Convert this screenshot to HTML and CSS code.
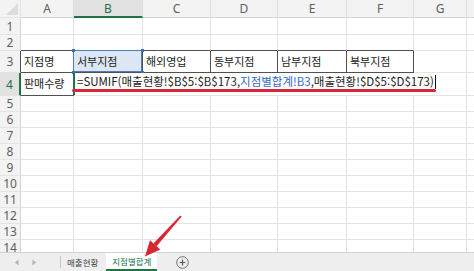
FILE: index.html
```html
<!DOCTYPE html>
<html lang="ko">
<head>
    <meta charset="UTF-8">
    <title>지점별합계</title>
    <link rel="stylesheet" href="styles.css">
</head>
<body>
<div class="app">
    <div class="sheet">
        <div class="grid">
            <div class="corner"><span class="tri"></span></div>
            <div class="ch">A</div><div class="ch sel">B</div><div class="ch">C</div><div class="ch">D</div><div class="ch">E</div><div class="ch">F</div><div class="ch">G</div><div class="ch"></div>

            <div class="rh">1</div><div></div><div></div><div></div><div></div><div></div><div></div><div></div><div></div>
            <div class="rh">2</div><div class="above"></div><div class="above"></div><div class="above"></div><div class="above"></div><div class="above"></div><div class="above"></div><div></div><div></div>

            <div class="rh edge">3</div>
            <div class="t">지점명</div>
            <div class="t ref">서부지점
                <i class="hd tl"></i><i class="hd tr"></i><i class="hd bl"></i><i class="hd br"></i>
            </div>
            <div class="t">해외영업</div>
            <div class="t">동부지점</div>
            <div class="t">남부지점</div>
            <div class="t">북부지점</div>
            <div></div><div></div>

            <div class="rh sel">4</div>
            <div class="t low">판매수량</div>
            <div class="active">
                <div class="editor">=SUMIF(매출현황!$B$5:$B$173,<span class="hl">지점별합계!B3</span>,매출현황!$D$5:$D$173)<span class="caret"></span></div>
            </div>
            <div></div><div></div><div></div><div></div><div></div><div></div>

            <div class="rh">5</div><div></div><div></div><div></div><div></div><div></div><div></div><div></div><div></div>
            <div class="rh">6</div><div></div><div></div><div></div><div></div><div></div><div></div><div></div><div></div>
            <div class="rh">7</div><div></div><div></div><div></div><div></div><div></div><div></div><div></div><div></div>
            <div class="rh">8</div><div></div><div></div><div></div><div></div><div></div><div></div><div></div><div></div>
            <div class="rh">9</div><div></div><div></div><div></div><div></div><div></div><div></div><div></div><div></div>
            <div class="rh">10</div><div></div><div></div><div></div><div></div><div></div><div></div><div></div><div></div>
            <div class="rh">11</div><div></div><div></div><div></div><div></div><div></div><div></div><div></div><div></div>
            <div class="rh">12</div><div></div><div></div><div></div><div></div><div></div><div></div><div></div><div></div>
            <div class="rh">13</div><div></div><div></div><div></div><div></div><div></div><div></div><div></div><div></div>
            <div class="rh">14</div><div></div><div></div><div></div><div></div><div></div><div></div><div></div><div></div>
        </div>
        <div class="mark"></div>
    </div>

    <div class="tabs">
        <div class="nav">
            <svg width="5" height="7" viewBox="0 0 5 7"><path d="M4.5 0.5 L0.8 3.5 L4.5 6.5 Z" fill="#b4b4b4"/></svg>
            <svg width="5" height="7" viewBox="0 0 5 7"><path d="M0.5 0.5 L4.2 3.5 L0.5 6.5 Z" fill="#b4b4b4"/></svg>
        </div>
        <div class="tab">매출현황</div>
        <div class="tab current">지점별합계</div>
        <div class="add">
            <svg width="13" height="13" viewBox="0 0 13 13">
                <circle cx="6.5" cy="6.5" r="5.8" fill="none" stroke="#6f6f6f" stroke-width="1"/>
                <path d="M6.5 3.6 V9.4 M3.6 6.5 H9.4" stroke="#555" stroke-width="1.2"/>
            </svg>
        </div>
    </div>

    <svg class="arrow" width="474" height="271" viewBox="0 0 474 271">
        <polygon points="181.7,216.6 156.6,246.3 153.4,243.5 180.3,215.4" fill="#d7262f"/>
        <polygon points="145,256.5 160.2,249.4 150,240.3" fill="#d7262f"/>
    </svg>
</div>
</body>
</html>
```

FILE: styles.css
```css
body {
    margin: 0;
    background: #fff;
    font-family: "Noto Sans CJK KR", "Noto Sans", sans-serif;
}

.app {
    position: relative;
    width: 474px;
    height: 271px;
    overflow: hidden;
}

.sheet {
    position: relative;
    height: 252px;
    overflow: hidden;
}

.grid {
    display: grid;
    grid-template-columns: 21px 53px 69px 68px 67px 69px 67px 53px 40px;
    grid-template-rows: 18px 17px 16px 22px 23px repeat(10, 16px);
}

.grid > div {
    box-sizing: border-box;
    border-right: 1px solid #e3e3e3;
    border-bottom: 1px solid #e3e3e3;
    font-size: 11px;
    color: #1a1a1a;
}

.corner {
    background: #f3f3f3;
    display: flex;
    align-items: flex-end;
    justify-content: flex-end;
    padding: 0 2px 2px 0;
}

.tri {
    width: 0;
    height: 0;
    border-left: 12px solid transparent;
    border-bottom: 12px solid #dcdcdc;
}

.grid > .ch {
    background: #f3f3f3;
    border-right-color: #dedede;
    border-bottom-color: #d4d4d4;
    font-family: "Noto Sans", sans-serif;
    font-size: 12px;
    color: #5e5e5e;
    display: flex;
    align-items: center;
    justify-content: center;
}

.grid > .ch.sel {
    background: #e1e1e1;
    color: #217346;
    border-bottom: 2px solid #217346;
}

.grid > .rh {
    background: #f3f3f3;
    border-right-color: #d4d4d4;
    border-bottom-color: #e3e3e3;
    font-family: "Noto Sans", sans-serif;
    font-size: 12px;
    color: #5e5e5e;
    display: flex;
    align-items: center;
    justify-content: center;
}

.grid > .rh.edge {
    border-right-color: #505050;
}

.grid > .rh.sel {
    background: #e1e1e1;
    color: #217346;
    border-right: 2px solid #217346;
}

.grid > .above {
    border-bottom-color: #505050;
}

.grid > .t {
    border-right-color: #505050;
    border-bottom-color: #505050;
    padding-left: 3px;
    line-height: 20px;
    white-space: nowrap;
}

.grid > .t.low {
    line-height: 21px;
}

.grid > .ref {
    position: relative;
    background: #dce6f4;
}

.ref::after {
    content: "";
    position: absolute;
    top: -1px;
    left: -1px;
    right: 0;
    bottom: 0;
    border: 1px solid #4a7ebf;
}

.hd {
    position: absolute;
    width: 3px;
    height: 3px;
    background: #3b6fb6;
    z-index: 1;
}

.hd.tl { top: -2px; left: -2px; }
.hd.tr { top: -2px; right: -2px; }
.hd.bl { bottom: -2px; left: -2px; }
.hd.br { bottom: -2px; right: -2px; }

.grid > .active {
    position: relative;
}

.editor {
    position: absolute;
    top: 0;
    left: -1px;
    width: 361px;
    height: 22px;
    box-sizing: border-box;
    background: #fff;
    border-left: 2px solid #217346;
    padding-left: 2px;
    font-size: 11.5px;
    line-height: 16px;
    color: #1a1a1a;
    white-space: nowrap;
    z-index: 2;
}

.hl {
    color: #3169c6;
}

.caret {
    display: inline-block;
    width: 0;
    height: 14px;
    border-left: 1px solid #111;
    margin-left: 1px;
    vertical-align: -3px;
}

.mark {
    position: absolute;
    left: 72px;
    top: 89px;
    width: 364px;
    height: 3px;
    border-radius: 2px;
    background: #d7263a;
    z-index: 3;
}

.tabs {
    height: 19px;
    box-sizing: border-box;
    border-top: 1px solid #d2d2d2;
    background: #eeeeee;
    display: flex;
    align-items: stretch;
    font-size: 8.5px;
    color: #444;
}

.nav {
    width: 61px;
    box-sizing: border-box;
    display: flex;
    align-items: center;
    gap: 13px;
    padding-left: 14px;
    border-right: 1px solid #c4c4c4;
    margin: 3px 0;
}

.tab {
    display: flex;
    align-items: center;
    padding: 0 7px 0 6px;
}

.tab.current {
    background: #fff;
    color: #217346;
    border-bottom: 2px solid #217346;
    padding: 0 6px;
    margin-left: 1px;
}

.add {
    display: flex;
    align-items: center;
    margin-left: 19px;
}

.arrow {
    position: absolute;
    left: 0;
    top: 0;
    pointer-events: none;
}
```
